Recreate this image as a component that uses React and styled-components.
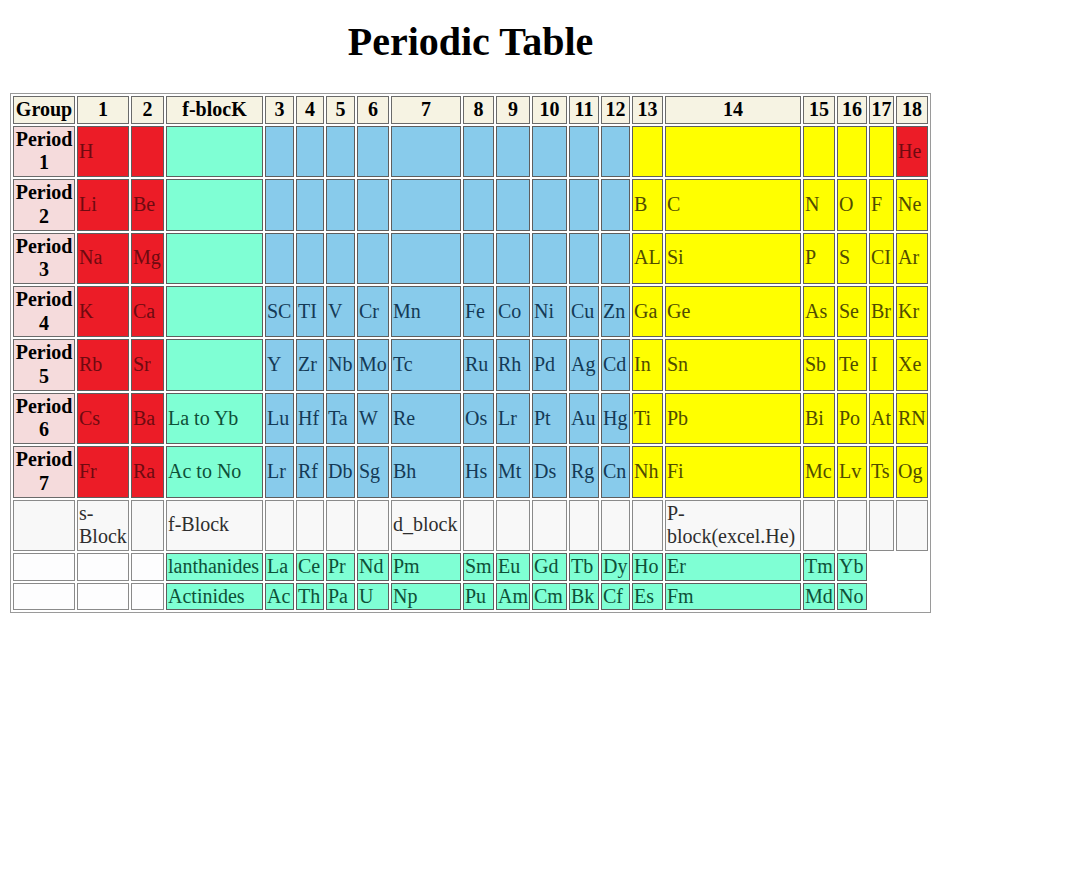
import React from 'react';
import styled, { createGlobalStyle } from 'styled-components';

const GlobalStyle = createGlobalStyle`
  body {
    margin: 0;
    background: #ffffff;
    font-family: "Liberation Serif", "Times New Roman", serif;
    color: #000;
  }
`;

const Page = styled.div`
  padding-left: 10px;
`;

const Wrapper = styled.div`
  display: inline-block;
`;

const Title = styled.h1`
  margin: 18px 0 28px 0;
  text-align: center;
  font: 700 40px "Liberation Serif", "Times New Roman", serif;
`;

const Table = styled.table`
  border-collapse: separate;
  border-spacing: 2px;
  border: 1px solid #9a9a9a;
  font-size: 20px;
  line-height: 23.7px;
`;

const HeadCell = styled.th`
  box-sizing: border-box;
  width: ${(p) => p.$w}px;
  padding: 1px;
  border: 1px solid #6a6a6a;
  background: #f6f3e3;
  font-weight: 700;
  text-align: center;
`;

const PeriodCell = styled.th`
  padding: 1px;
  border: 1px solid #6a6a6a;
  background: #f5dbdc;
  font-weight: 700;
  text-align: center;
`;

const palette = {
  red: ['#ec1c27', '#6e0a10'],
  aqua: ['#7fffd4', '#0e5038'],
  blue: ['#88cbeb', '#143a56'],
  yellow: ['#ffff00', '#504c00'],
  blank: ['#f8f8f8', '#2e2e2e'],
  white: ['#fdfdfe', '#2e2e2e'],
};

const Cell = styled.td`
  padding: 1px;
  border: 1px solid #5e5e5e;
  background: ${(p) => palette[p.$kind][0]};
  color: ${(p) => palette[p.$kind][1]};
  text-align: left;
  vertical-align: middle;
  ${(p) => (p.$kind === 'blank' || p.$kind === 'white') && 'border-color: #8a8a8a;'}
`;

const headers = [
  ['Group', 62], ['1', 52], ['2', 33], ['f-blocK', 97], ['3', 29], ['4', 28],
  ['5', 29], ['6', 32], ['7', 70], ['8', 31], ['9', 34], ['10', 35], ['11', 30],
  ['12', 29], ['13', 31], ['14', 136], ['15', 32], ['16', 30], ['17', 25], ['18', 32],
];

const e10 = ['', '', '', '', '', '', '', '', '', ''];

const periods = [
  ['H', '', '', ...e10, '', '', '', '', '', 'He'],
  ['Li', 'Be', '', ...e10, 'B', 'C', 'N', 'O', 'F', 'Ne'],
  ['Na', 'Mg', '', ...e10, 'AL', 'Si', 'P', 'S', 'CI', 'Ar'],
  ['K', 'Ca', '', 'SC', 'TI', 'V', 'Cr', 'Mn', 'Fe', 'Co', 'Ni', 'Cu', 'Zn', 'Ga', 'Ge', 'As', 'Se', 'Br', 'Kr'],
  ['Rb', 'Sr', '', 'Y', 'Zr', 'Nb', 'Mo', 'Tc', 'Ru', 'Rh', 'Pd', 'Ag', 'Cd', 'In', 'Sn', 'Sb', 'Te', 'I', 'Xe'],
  ['Cs', 'Ba', 'La to Yb', 'Lu', 'Hf', 'Ta', 'W', 'Re', 'Os', 'Lr', 'Pt', 'Au', 'Hg', 'Ti', 'Pb', 'Bi', 'Po', 'At', 'RN'],
  ['Fr', 'Ra', 'Ac to No', 'Lr', 'Rf', 'Db', 'Sg', 'Bh', 'Hs', 'Mt', 'Ds', 'Rg', 'Cn', 'Nh', 'Fi', 'Mc', 'Lv', 'Ts', 'Og'],
];

// kind of a cell in a period row, by column index (after the Period cell)
function kindOf(period, i) {
  if (period === 1 && i === 18) return 'red';
  if (i < 2) return 'red';
  if (i === 2) return 'aqua';
  if (i < 13) return 'blue';
  return 'yellow';
}

const blocks = [
  '', 's-Block', '', 'f-Block', '', '', '', '', 'd_block', '', '', '', '', '', '',
  'P-block(excel.He)', '', '', '', '',
];

const series = [
  ['lanthanides', 'La', 'Ce', 'Pr', 'Nd', 'Pm', 'Sm', 'Eu', 'Gd', 'Tb', 'Dy', 'Ho', 'Er', 'Tm', 'Yb'],
  ['Actinides', 'Ac', 'Th', 'Pa', 'U', 'Np', 'Pu', 'Am', 'Cm', 'Bk', 'Cf', 'Es', 'Fm', 'Md', 'No'],
];

export default function App() {
  return (
    <Page>
      <GlobalStyle />
      <Wrapper>
        <Title>Periodic Table</Title>
        <Table>
          <tbody>
            <tr>
              {headers.map(([label, w]) => (
                <HeadCell key={label} $w={w}>{label}</HeadCell>
              ))}
            </tr>
            {periods.map((row, p) => (
              <tr key={p}>
                <PeriodCell>
                  Period
                  <br />
                  {p + 1}
                </PeriodCell>
                {row.map((sym, i) => (
                  <Cell key={i} $kind={kindOf(p + 1, i)}>{sym}</Cell>
                ))}
              </tr>
            ))}
            <tr>
              {blocks.map((label, i) => (
                <Cell key={i} $kind="blank">{label}</Cell>
              ))}
            </tr>
            {series.map((row, r) => (
              <tr key={r}>
                <Cell $kind="white" />
                <Cell $kind="white" />
                <Cell $kind="white" />
                {row.map((sym, i) => (
                  <Cell key={i} $kind="aqua">{sym}</Cell>
                ))}
              </tr>
            ))}
          </tbody>
        </Table>
      </Wrapper>
    </Page>
  );
}
